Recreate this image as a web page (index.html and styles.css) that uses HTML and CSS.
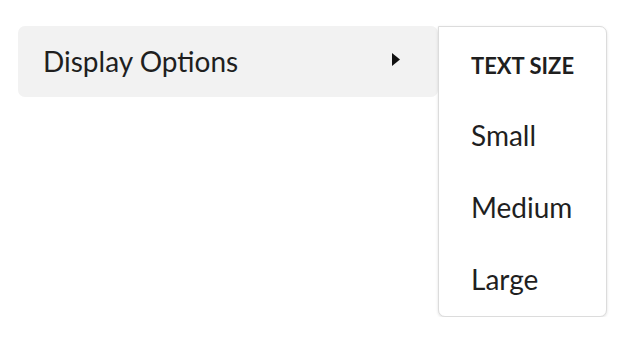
FILE: index.html
```html
<!DOCTYPE html>
<html>
<head>
<meta charset="utf-8">
<link rel="stylesheet" href="styles.css">
</head>
<body>
<div class="stage">
  <div class="menu-item">
    <span class="label">Display Options</span>
    <svg class="caret" width="8" height="13" viewBox="0 0 8 13"><path d="M0 0 L8 6.5 L0 13 Z" fill="#111"/></svg>
  </div>
  <div class="submenu">
    <div class="heading">TEXT SIZE</div>
    <div class="option">Small</div>
    <div class="option">Medium</div>
    <div class="option">Large</div>
  </div>
</div>
</body>
</html>
```
FILE: styles.css
```css
html, body { margin: 0; padding: 0; background: #fff; }
body { font-family: Lato, "Open Sans", sans-serif; color: #1f1f1f; }
.stage {
  display: flex;
  align-items: flex-start;
  padding: 26px 0 0 18px;
}
.menu-item {
  width: 420px;
  height: 71px;
  box-sizing: border-box;
  background: #f2f2f2;
  border-radius: 7px;
  display: flex;
  align-items: center;
  justify-content: space-between;
  padding: 0 38px 0 25px;
  font-size: 28px;
  line-height: 71px;
}
.caret { display: block; margin-top: -5px; }
.submenu {
  width: 169px;
  box-sizing: border-box;
  border: 1px solid #dcdcdc;
  border-radius: 0 7px 7px 7px;
  box-shadow: 0 1px 3px rgba(0,0,0,0.12);
  background: #fff;
  padding: 0 0 1px 32px;
}
.heading {
  font-weight: 700;
  font-size: 22px;
  line-height: 24px;
  padding: 27px 0 21px;
}
.option {
  font-size: 28px;
  line-height: 72px;
}
```
